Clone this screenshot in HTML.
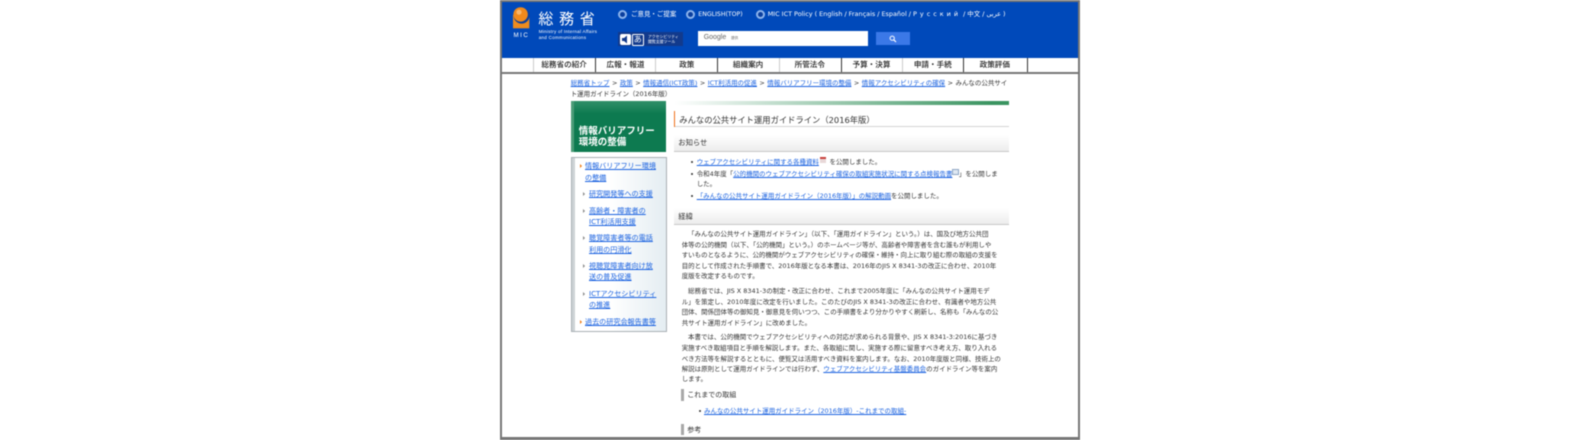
<!DOCTYPE html>
<html lang="ja"><head><meta charset="utf-8">
<style>
html,body{margin:0;padding:0;background:#fff;width:1580px;height:440px;overflow:hidden}
body{font-family:"DejaVu Sans","Noto Sans CJK JP",sans-serif;position:relative}
#w{position:absolute;left:0;top:0;width:1580px;height:440px;filter:blur(.42px)}
.a{position:absolute}
.t{position:absolute;white-space:nowrap;line-height:10px;font-size:6.47px;color:#333}
a{color:#1a62e0;text-decoration:underline}
.n{position:absolute;top:58px;height:14px;line-height:14px;width:61.6px;text-align:center;font-size:7.6px;color:#222;font-weight:500;white-space:nowrap}
.s{position:absolute;width:1px;top:58px;height:14px}
.m{font-size:7.1px}
.m a{color:#1a62e0}
.b{position:absolute;width:2px;height:2px;background:#333;border-radius:1px}
.r{position:absolute;width:5px;height:5px;border:2.2px solid #8db4ec;border-radius:50%;background:#0b3f9e;top:9.7px}
.w{color:#fff}
.bar{position:absolute;left:674px;width:335px;height:16px;background:linear-gradient(#fff,#ececec);border-bottom:1px solid #c8c8c8}
.h{position:absolute;left:681px;width:3px;background:#a8a8a8}
.ar{position:absolute;width:0;height:0;border-left:2.2px solid #888;border-top:2px solid transparent;border-bottom:2px solid transparent}
.ao{border-left-color:#f07a10}
</style></head><body>
<div id="w">
<!-- frame -->
<div class="a" style="left:500px;top:0;width:580px;height:440px;background:#777"></div>
<div class="a" style="left:501.7px;top:2px;width:576.3px;height:435.2px;background:#fff"></div>
<div class="a" style="left:501.7px;top:2px;width:576.3px;height:55.8px;background:#0049ba"></div>
<div class="a" style="left:501.7px;top:72.2px;width:576.3px;height:1.4px;background:#777"></div>

<!-- logo -->
<svg class="a" style="left:513px;top:7px" width="17" height="22" viewBox="0 0 17 22">
<rect x="0" y="8" width="16.3" height="13.3" fill="#ee8c1e"/>
<circle cx="8.6" cy="8.6" r="8" fill="#0a3f9c"/>
<circle cx="7.6" cy="7.4" r="7.2" fill="#f08a1c"/>
<circle cx="6" cy="5.2" r="2.6" fill="#f7b56a"/>
</svg>
<div class="t w" style="left:513.5px;top:30.8px;font-size:6.2px;letter-spacing:1.5px;font-family:'Liberation Sans',sans-serif">MIC</div>
<div class="t w" style="left:538.4px;top:14.4px;font-size:15px;letter-spacing:5.7px">総務省</div>
<div class="t w" style="left:538.7px;top:27.3px;font-size:4.55px;letter-spacing:.27px;font-family:'Liberation Sans',sans-serif">Ministry of Internal Affairs</div>
<div class="t w" style="left:538.7px;top:32.7px;font-size:4.55px;letter-spacing:.27px;font-family:'Liberation Sans',sans-serif">and Communications</div>

<!-- top links -->
<div class="r" style="left:618.2px"></div>
<div class="t w" style="left:631px;top:9.3px">ご意見・ご提案</div>
<div class="r" style="left:686.2px"></div>
<div class="t w" style="left:698.3px;top:10.2px;font-size:6.2px">ENGLISH(TOP)</div>
<div class="r" style="left:755.5px"></div>
<div class="t w" style="left:767.7px;top:9.3px;font-size:6.45px">MIC ICT Policy ( English / Français / Español / <span style="letter-spacing:3px">Русский</span> / 中文 / عربى )</div>

<!-- accessibility badge -->
<div class="a" style="left:617.7px;top:32.3px;width:65px;height:13.7px;background:#123a8c"></div>
<div class="a" style="left:620px;top:34px;width:10.5px;height:10.5px;background:#fff;border-radius:2px"></div>
<svg class="a" style="left:620px;top:34px" width="11" height="11" viewBox="0 0 11 11"><path d="M2 4h2l3-2.5v8L4 7H2z" fill="#123a8c"/></svg>
<div class="a" style="left:632px;top:34px;width:9.6px;height:10px;border:.6px solid #fff;color:#fff;font-size:8px;line-height:10px;text-align:center;border-radius:1.5px">あ</div>
<div class="t w" style="left:648px;top:31.8px;font-size:3.9px">アクセシビリティ</div>
<div class="t w" style="left:648px;top:36.8px;font-size:3.9px">閲覧支援ツール</div>

<!-- search -->
<div class="a" style="left:698.3px;top:30.7px;width:170px;height:15px;background:#fff"></div>
<div class="t" style="left:703.7px;top:32.7px;font-size:7px;color:#666;font-family:'Liberation Sans',sans-serif">Google</div>
<div class="t" style="left:731px;top:32.9px;font-size:3.6px;color:#666">提供</div>
<div class="a" style="left:875.7px;top:31.7px;width:34.3px;height:13.3px;background:#3b78e7"></div>
<svg class="a" style="left:888.5px;top:34.5px" width="8" height="8" viewBox="0 0 8 8"><circle cx="3.2" cy="3.2" r="2.1" fill="none" stroke="#fff" stroke-width="1"/><path d="M4.8 4.8L7 7" stroke="#fff" stroke-width="1.2"/></svg>

<!-- nav -->
<div class="s" style="left:533.3px;background:#ccc"></div>
<div class="s" style="left:594.7px;background:#333"></div>
<div class="s" style="left:655.3px;background:#ccc"></div>
<div class="s" style="left:717.3px;background:#333"></div>
<div class="s" style="left:778.7px;background:#ccc"></div>
<div class="s" style="left:840.7px;background:#333"></div>
<div class="s" style="left:901.7px;background:#ccc"></div>
<div class="s" style="left:963.3px;background:#333"></div>
<div class="s" style="left:1026.7px;background:#333"></div>
<div class="n" style="left:533.3px">総務省の紹介</div>
<div class="n" style="left:594.7px">広報・報道</div>
<div class="n" style="left:656px">政策</div>
<div class="n" style="left:717.3px">組織案内</div>
<div class="n" style="left:779px">所管法令</div>
<div class="n" style="left:840.7px">予算・決算</div>
<div class="n" style="left:902px">申請・手続</div>
<div class="n" style="left:964px">政策評価</div>

<!-- breadcrumb -->
<div class="t" style="left:570.7px;top:78.3px;word-spacing:.4px"><a href="#">総務省トップ</a> &gt; <a href="#">政策</a> &gt; <a href="#">情報通信(ICT政策)</a> &gt; <a href="#">ICT利活用の促進</a> &gt; <a href="#">情報バリアフリー環境の整備</a> &gt; <a href="#">情報アクセシビリティの確保</a> &gt; みんなの公共サイ</div>
<div class="t" style="left:570.7px;top:88.7px">ト運用ガイドライン（2016年版）</div>

<!-- sidebar head -->
<div class="a" style="left:570.7px;top:101.3px;width:95.3px;height:50.7px;background:linear-gradient(#2f8f68,#0d7a50 25%,#0d7a50)"></div>
<div class="a" style="left:570.7px;top:101.3px;width:3.6px;height:50.7px;background:#4c9c78"></div>
<div class="t w" style="left:578.7px;top:127px;font-size:9.5px;font-weight:700">情報バリアフリー</div>
<div class="t w" style="left:578.7px;top:137.7px;font-size:9.5px;font-weight:700">環境の整備</div>

<!-- sidebar menu -->
<div class="a" style="left:571px;top:157px;width:93.8px;height:173px;border:1px solid #a9b0b4;background:linear-gradient(90deg,#fff 40%,#e4edf2)"></div>
<div class="a" style="left:572px;top:158px;width:3.2px;height:173px;background:#cdd3d6"></div>
<div class="ar ao" style="left:579.5px;top:164px"></div>
<div class="t m" style="left:585px;top:161px"><a href="#">情報バリアフリー環境</a></div>
<div class="t m" style="left:585px;top:173px"><a href="#">の整備</a></div>
<div class="ar" style="left:583px;top:192.3px"></div>
<div class="t m" style="left:589px;top:189.3px"><a href="#">研究開発等への支援</a></div>
<div class="ar" style="left:583px;top:208.7px"></div>
<div class="t m" style="left:589px;top:205.7px"><a href="#">高齢者・障害者の</a></div>
<div class="t m" style="left:589px;top:216.7px"><a href="#">ICT利活用支援</a></div>
<div class="ar" style="left:583px;top:236.3px"></div>
<div class="t m" style="left:589px;top:233.3px"><a href="#">聴覚障害者等の電話</a></div>
<div class="t m" style="left:589px;top:244.7px"><a href="#">利用の円滑化</a></div>
<div class="ar" style="left:583px;top:264px"></div>
<div class="t m" style="left:589px;top:261px"><a href="#">視聴覚障害者向け放</a></div>
<div class="t m" style="left:589px;top:272.3px"><a href="#">送の普及促進</a></div>
<div class="ar" style="left:583px;top:292px"></div>
<div class="t m" style="left:589px;top:289px"><a href="#">ICTアクセシビリティ</a></div>
<div class="t m" style="left:589px;top:300px"><a href="#">の推進</a></div>
<div class="ar ao" style="left:579.5px;top:319.7px"></div>
<div class="t m" style="left:585px;top:316.7px"><a href="#">過去の研究会報告書等</a></div>

<!-- main head -->
<div class="a" style="left:674px;top:101.3px;width:335px;height:3.6px;background:linear-gradient(90deg,#fff,#3a9460 95%)"></div>
<div class="a" style="left:674px;top:111.3px;width:335px;height:16px;border-bottom:1px solid #d4d4d4;box-sizing:border-box"></div>
<div class="a" style="left:674px;top:111.3px;width:1.4px;height:16px;background:#f0701a"></div>
<div class="t" style="left:679.3px;top:114.5px;font-size:8.3px">みんなの公共サイト運用ガイドライン（2016年版）</div>

<div class="bar" style="top:135px"></div>
<div class="t" style="left:678.3px;top:138px;font-size:7.3px">お知らせ</div>

<div class="b" style="left:691px;top:161.2px"></div>
<div class="t" style="left:696.7px;top:157px"><a href="#">ウェブアクセシビリティに関する各種資料</a><span style="display:inline-block;width:6.5px;height:6px;background:#e8d8d8;border-top:2px solid #c8403c;box-sizing:border-box;vertical-align:1px;margin:0 1px"></span> を公開しました。</div>
<div class="b" style="left:691px;top:172.8px"></div>
<div class="t" style="left:696.7px;top:168.7px">令和4年度「<a href="#">公的機関のウェブアクセシビリティ確保の取組実施状況に関する点検報告書</a><span style="display:inline-block;width:6.5px;height:6px;background:#dfe8f2;border:.6px solid #8ea6c4;box-sizing:border-box;vertical-align:1px"></span>」を公開しま</div>
<div class="t" style="left:696.7px;top:179.3px">した。</div>
<div class="b" style="left:691px;top:195.4px"></div>
<div class="t" style="left:696.7px;top:191.3px"><a href="#">「みんなの公共サイト運用ガイドライン（2016年版）」の解説動画</a>を公開しました。</div>

<div class="bar" style="top:208px"></div>
<div class="t" style="left:678.3px;top:211.7px;font-size:7.3px">経緯</div>

<div class="t" style="left:688px;top:229.3px">「みんなの公共サイト運用ガイドライン」（以下、「運用ガイドライン」という。）は、国及び地方公共団</div>
<div class="t" style="left:681.7px;top:240px">体等の公的機関（以下、「公的機関」という。）のホームページ等が、高齢者や障害者を含む誰もが利用しや</div>
<div class="t" style="left:681.7px;top:250.3px">すいものとなるように、公的機関がウェブアクセシビリティの確保・維持・向上に取り組む際の取組の支援を</div>
<div class="t" style="left:681.7px;top:261px">目的として作成された手順書で、2016年版となる本書は、2016年のJIS X 8341-3の改正に合わせ、2010年</div>
<div class="t" style="left:681.7px;top:271px">度版を改定するものです。</div>

<div class="t" style="left:688px;top:286px">総務省では、JIS X 8341-3の制定・改正に合わせ、これまで2005年度に「みんなの公共サイト運用モデ</div>
<div class="t" style="left:681.7px;top:296.7px">ル」を策定し、2010年度に改定を行いました。このたびのJIS X 8341-3の改正に合わせ、有識者や地方公共</div>
<div class="t" style="left:681.7px;top:307px">団体、関係団体等の御知見・御意見を伺いつつ、この手順書をより分かりやすく刷新し、名称も「みんなの公</div>
<div class="t" style="left:681.7px;top:317.7px">共サイト運用ガイドライン」に改めました。</div>

<div class="t" style="left:688px;top:332.3px">本書では、公的機関でウェブアクセシビリティへの対応が求められる背景や、JIS X 8341-3:2016に基づき</div>
<div class="t" style="left:681.7px;top:343.3px">実施すべき取組項目と手順を解説します。また、各取組に関し、実施する際に留意すべき考え方、取り入れる</div>
<div class="t" style="left:681.7px;top:354px">べき方法等を解説するとともに、便覧又は活用すべき資料を案内します。なお、2010年度版と同様、技術上の</div>
<div class="t" style="left:681.7px;top:364px">解説は原則として運用ガイドラインでは行わず、<a href="#">ウェブアクセシビリティ基盤委員会</a>のガイドライン等を案内</div>
<div class="t" style="left:681.7px;top:374.3px">します。</div>

<div class="h" style="top:389.3px;height:11.7px"></div>
<div class="t" style="left:687.3px;top:390.3px;font-size:7px">これまでの取組</div>
<div class="b" style="left:698.5px;top:410px"></div>
<div class="t" style="left:704px;top:406px"><a href="#">みんなの公共サイト運用ガイドライン（2016年版）-これまでの取組-</a></div>
<div class="h" style="top:424px;height:11px"></div>
<div class="t" style="left:687.3px;top:424.5px;font-size:7px">参考</div>
</div>
</body></html>
